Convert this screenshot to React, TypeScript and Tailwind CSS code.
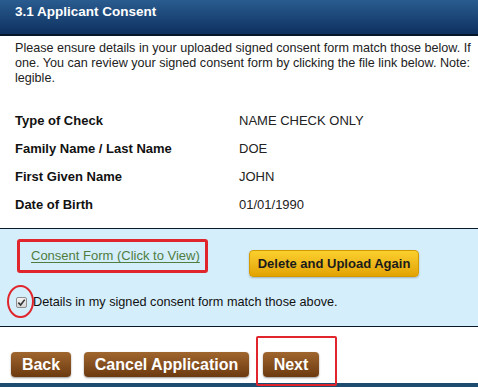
const rows = [
  { label: 'Type of Check', value: 'NAME CHECK ONLY' },
  { label: 'Family Name / Last Name', value: 'DOE' },
  { label: 'First Given Name', value: 'JOHN' },
  { label: 'Date of Birth', value: '01/01/1990' },
];

function BrownButton({ label, className }: { label: string; className?: string }) {
  return (
    <button
      className={
        'h-[25px] rounded-[4px] bg-gradient-to-b from-[#a0662e] to-[#6c3a10] text-[16px] font-bold leading-none text-white shadow-[0_1px_2px_rgba(0,0,0,0.4)] ' +
        (className ?? '')
      }
    >
      {label}
    </button>
  );
}

export default function App() {
  return (
    <div
      className="relative h-[387px] w-[478px] overflow-hidden bg-white text-[#1a1a1a]"
      style={{ fontFamily: '"Liberation Sans", Arial, sans-serif' }}
    >
      {/* section header */}
      <div className="h-[36px] border-b-2 border-[#06162b] bg-gradient-to-b from-[#2a5c90] to-[#0e3160] px-[15px] pt-[4px]">
        <h2 className="text-[13.5px] font-bold leading-[16px] text-white">3.1 Applicant Consent</h2>
      </div>

      <div className="mt-[5px] whitespace-nowrap pl-[15px] text-[12.6px] leading-[15px] text-[#222]">
        <p>Please ensure details in your uploaded signed consent form match those below. If</p>
        <p>one. You can review your signed consent form by clicking the file link below. Note:</p>
        <p>legible.</p>
      </div>

      <div className="mt-[21px] mb-[9px] px-[15px]">
        {rows.map((row) => (
          <div key={row.label} className="grid h-[28px] grid-cols-[224px_1fr] items-center text-[13px]">
            <span className="font-bold text-[#111]">{row.label}</span>
            <span className="text-[#222]">{row.value}</span>
          </div>
        ))}
      </div>

      {/* consent section */}
      <div className="relative h-[99px] border-y border-[#0b1a2b] bg-[#d5eefb]">
        <div className="flex items-start pt-[10px]">
          <div className="ml-[17px] flex h-[34px] w-[191px] items-center rounded-[3px] border-[3px] border-[#e0262c] pl-[11px]">
            <a className="text-[13px] text-[#4f7d3f] underline underline-offset-2">Consent Form (Click to View)</a>
          </div>
          <button className="ml-[41px] mt-[11px] h-[27px] w-[170px] rounded-[4px] border border-[#d39a00] bg-gradient-to-b from-[#fbd02c] to-[#e3a300] text-[13px] font-bold text-[#1b1b1b] shadow-[0_1px_2px_rgba(0,0,0,0.25)]">
            Delete and Upload Again
          </button>
        </div>
        <label className="mt-[16px] flex items-center text-[12.7px] text-[#111]">
          <span className="ml-[16px] mr-[6px] flex h-[11px] w-[11px] items-center justify-center rounded-[2px] border border-[#8d8d8d] bg-gradient-to-b from-[#f4f4f4] to-[#d6d6d6]">
            <svg viewBox="0 0 10 10" className="h-[9px] w-[9px]">
              <path d="M1.5 5.2 L4 7.8 L8.6 1.8" fill="none" stroke="#333" strokeWidth="1.8" />
            </svg>
          </span>
          Details in my signed consent form match those above.
        </label>
        <div className="absolute left-[7px] top-[56px] h-[33px] w-[27px] rounded-[50%] border-2 border-[#e0262c]" />
      </div>

      {/* actions */}
      <div className="relative flex h-[56px] items-start pl-[11px] pt-[25px]">
        <BrownButton label="Back" className="w-[60px]" />
        <BrownButton label="Cancel Application" className="ml-[13px] w-[165px]" />
        <BrownButton label="Next" className="ml-[14px] w-[56px]" />
        <div className="absolute left-[256px] top-[9px] h-[50px] w-[81px] rounded-[2px] border-2 border-[#e0262c]" />
      </div>
      <div className="h-[4px] bg-[#1d4c70]" />
    </div>
  );
}
